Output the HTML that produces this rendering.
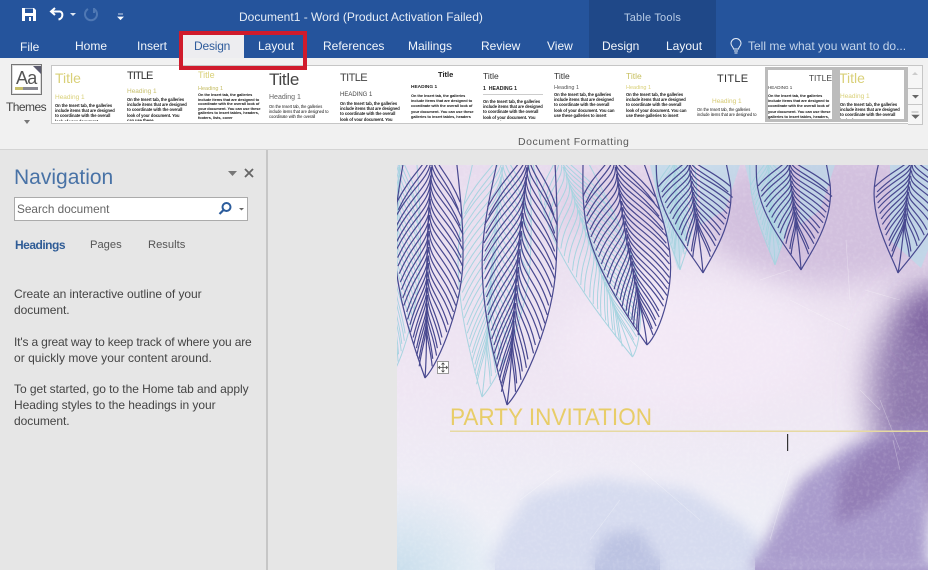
<!DOCTYPE html>
<html><head><meta charset="utf-8"><title>Document1 - Word</title>
<style>
html,body{margin:0;padding:0;overflow:hidden;width:928px;height:570px}
body{position:relative;background:#e6e6e6;font-family:"Liberation Sans",sans-serif;}
#w{position:absolute;left:0;top:0;width:928px;height:570px;overflow:hidden;filter:blur(.35px)}
.a{position:absolute;white-space:nowrap}
.t{position:absolute;white-space:nowrap;color:#f2f6fb;font-size:12px;top:39px;line-height:14px}
.th{position:absolute;overflow:hidden;top:67px;height:54px;width:69px;font-family:"Liberation Sans",sans-serif}
.th div{position:absolute;white-space:nowrap}
.b{font-size:4.1px;line-height:5.2px;color:#111;white-space:normal!important;font-weight:bold;width:60px;left:0;height:26px;overflow:hidden;letter-spacing:-.05px}
.g{color:#d9d078}
.p{position:absolute;left:14px;font-size:12px;line-height:16px;color:#444;white-space:nowrap;letter-spacing:-.05px}
</style></head><body><div id="w">
<!-- title bar -->
<div class="a" style="left:0;top:0;width:928px;height:58px;background:#25549c"></div>
<div class="a" style="left:589px;top:0;width:127px;height:58px;background:#1f4888"></div>
<div class="a" style="left:239px;top:10px;font-size:12px;line-height:15px;color:#e6edf6">Document1 - Word (Product Activation Failed)</div>
<div class="a" style="left:624px;top:11px;font-size:11px;line-height:14px;color:#b8cce6;letter-spacing:.2px">Table Tools</div>
<svg class="a" style="left:0;top:0" width="140" height="30" viewBox="0 0 140 30">
<path d="M22 8h12l2 2v11H22z" fill="#fff"/><rect x="25" y="8.500" width="8" height="4.500" fill="#25549c"/><rect x="25" y="16" width="8" height="5" fill="#25549c"/><rect x="29" y="17" width="2" height="4" fill="#fff"/>
<path d="M55 8l-4 3.500 4 3.500M51.500 11.500h8c4 0 4 7-1 8" fill="none" stroke="#fff" stroke-width="2"/>
<path d="M70 13h6l-3 3z" fill="#dfe8f3"/>
<path d="M88 9a6 6 0 1 0 6 0M94 8v5" fill="none" stroke="#4f78b4" stroke-width="2"/>
<path d="M118 14h5M118 17h5l-2.500 2.500z" fill="#fff" stroke="#fff" stroke-width=".8"/>
</svg>
<!-- tabs -->
<div class="a" style="left:183px;top:35px;width:61px;height:24px;background:#ededf0"></div>
<div class="t" style="left:20px;top:40px">File</div>
<div class="t" style="left:75px">Home</div>
<div class="t" style="left:137px">Insert</div>
<div class="t" style="left:194px;color:#2f5c9c;letter-spacing:-.2px">Design</div>
<div class="t" style="left:258px">Layout</div>
<div class="t" style="left:323px">References</div>
<div class="t" style="left:408px">Mailings</div>
<div class="t" style="left:481px">Review</div>
<div class="t" style="left:547px">View</div>
<div class="t" style="left:602px">Design</div>
<div class="t" style="left:666px">Layout</div>
<div class="t" style="left:748px;color:#c3d4ea">Tell me what you want to do...</div>
<svg class="a" style="left:729px;top:38px" width="15" height="17" viewBox="0 0 15 17"><path d="M4.500 11c0-2-2.500-3-2.500-5.500a5 5 0 0 1 10 0C12 8 9.500 9 9.500 11zM5 13h4M5.500 15h3" fill="none" stroke="#e8eff8" stroke-width="1"/></svg>
<!-- ribbon -->
<div class="a" style="left:0;top:58px;width:928px;height:91px;background:#f1f1f1;border-bottom:1px solid #d4d4d4"></div>
<div class="a" style="left:179px;top:31px;width:120px;height:31px;border:4.500px solid #d01b2c;z-index:5"></div>
<!-- themes -->
<div class="a" style="left:11px;top:64px;width:29px;height:29px;border:1px solid #777;background:#fff;box-shadow:inset 0 0 0 1px #ddd"></div>
<svg class="a" style="left:11px;top:64px" width="31" height="31" viewBox="0 0 31 31"><path d="M22 2h8v8z" fill="#5b5b6e"/><rect x="4" y="23" width="23" height="3" fill="#8a8a92"/><rect x="4" y="23" width="8" height="3" fill="#c8c06c"/></svg>
<div class="a" style="left:16px;top:67px;font-size:18px;line-height:22px;color:#555;letter-spacing:-.8px">Aa</div>
<div class="a" style="left:6px;top:100px;font-size:12px;line-height:15px;color:#444;letter-spacing:-.55px">Themes</div>
<svg class="a" style="left:22px;top:120px" width="10" height="5"><path d="M2 0h6l-3 4z" fill="#777"/></svg>
<div class="a" style="left:51px;top:65px;width:856px;height:57px;background:#fff;border:1px solid #c6c6c6"></div>
<!-- gallery -->
<div class="th" style="left:55px"><div class="g" style="top:3px;font-size:14px">Title</div><div class="g" style="top:27px;font-size:6.500px">Heading 1</div><div class="b" style="top:36px">On the Insert tab, the galleries include items that are designed to coordinate with the overall look of your document.</div></div>
<div class="th" style="left:127px"><div style="top:3px;font-size:11px;color:#333;letter-spacing:-.9px">TITLE</div><div class="g" style="top:21px;font-size:6.500px;color:#c7bf6c">Heading 1</div><div class="b" style="top:30px">On the Insert tab, the galleries include items that are designed to coordinate with the overall look of your document. You can use these</div></div>
<div class="th" style="left:198px"><div class="g" style="top:3px;font-size:9px">Title</div><div class="g" style="top:19px;font-size:5.500px;color:#c3bb60">Heading 1</div><div class="b" style="top:26px;font-size:3.900px;line-height:4.600px;height:27px;width:64px">On the Insert tab, the galleries include items that are designed to coordinate with the overall look of your document. You can use these galleries to insert tables, headers, footers, lists, cover</div></div>
<div class="th" style="left:269px"><div style="top:3px;font-size:17px;color:#444;letter-spacing:-.3px">Title</div><div style="top:27px;font-size:7px;color:#666">Heading 1</div><div class="b" style="top:37px;font-weight:normal">On the Insert tab, the galleries include items that are designed to coordinate with the overall</div></div>
<div class="th" style="left:340px"><div style="top:5px;font-size:11px;color:#444;letter-spacing:-.6px">TITLE</div><div style="top:25px;font-size:6px;color:#444">HEADING 1</div><div class="b" style="top:34px">On the Insert tab, the galleries include items that are designed to coordinate with the overall look of your document. You can use these</div></div>
<div class="th" style="left:411px"><div style="top:3px;left:27px;font-size:7.500px;font-weight:bold;color:#222">Title</div><div style="top:18px;font-size:4.800px;font-weight:bold;color:#222">HEADING 1</div><div class="b" style="top:26px;width:64px;height:27px;font-size:3.900px">On the Insert tab, the galleries include items that are designed to coordinate with the overall look of your document. You can use these galleries to insert tables, headers</div></div>
<div class="th" style="left:483px"><div style="top:4px;font-size:8.500px;color:#333">Title</div><div style="top:19px;font-size:5.200px;color:#222;font-weight:bold">1&nbsp; HEADING 1</div><div style="top:27px;width:60px;height:1px;background:#ccc"></div><div class="b" style="top:32px">On the Insert tab, the galleries include items that are designed to coordinate with the overall look of your document. You can use these</div></div>
<div class="th" style="left:554px"><div style="top:4px;font-size:8.500px;color:#333">Title</div><div style="top:18px;font-size:5.500px;color:#555">Heading 1</div><div class="b" style="top:25px;width:62px">On the Insert tab, the galleries include items that are designed to coordinate with the overall look of your document. You can use these galleries to insert tables, headers,</div></div>
<div class="th" style="left:626px"><div class="g" style="top:4px;font-size:8.500px;color:#c8c060">Title</div><div class="g" style="top:18px;font-size:5.500px">Heading 1</div><div class="b" style="top:25px;width:62px">On the Insert tab, the galleries include items that are designed to coordinate with the overall look of your document. You can use these galleries to insert tables, headers,</div></div>
<div class="th" style="left:697px"><div style="top:6px;left:20px;font-size:11px;color:#333;letter-spacing:.3px">TITLE</div><div class="g" style="top:31px;left:15px;font-size:6.500px;color:#d5c970">Heading 1</div><div class="b" style="top:40px;font-weight:normal;height:11px;width:62px">On the Insert tab, the galleries include items that are designed to</div></div>
<!-- selected -->
<div class="a" style="left:765px;top:67px;width:143px;height:55px;background:#bcbcbc"></div>
<div class="a" style="left:768px;top:70px;width:64px;height:49px;background:#fff"></div>
<div class="a" style="left:840px;top:70px;width:64px;height:49px;background:#fff"></div>
<div class="th" style="left:768px;top:70px;height:49px;width:64px"><div style="top:3px;right:0;font-size:8.500px;color:#444">TITLE</div><div style="top:15px;font-size:4.500px;color:#333">HEADING 1</div><div class="b" style="top:23px;width:64px;height:26px;font-size:3.900px">On the Insert tab, the galleries include items that are designed to coordinate with the overall look of your document. You can use these galleries to insert tables, headers, footers, lists, cover</div></div>
<div class="th" style="left:840px;top:70px;height:49px;width:64px"><div class="g" style="top:0;left:-1px;font-size:14px">Title</div><div class="g" style="top:23px;font-size:6.500px">Heading 1</div><div class="b" style="top:32px">On the Insert tab, the galleries include items that are designed to coordinate with the overall look of</div></div>
<!-- scroll -->
<div class="a" style="left:908px;top:65px;width:14px;height:58px;background:#f6f6f6;border:1px solid #c6c6c6;border-left:0"></div>
<div class="a" style="left:908px;top:88px;width:14px;height:1px;background:#c6c6c6"></div>
<div class="a" style="left:908px;top:104px;width:14px;height:1px;background:#c6c6c6"></div>
<svg class="a" style="left:908px;top:65px" width="15" height="58"><path d="M4 10h6l-3-3z" fill="#ccc"/><path d="M4 30h7l-3.500 3.500z" fill="#666"/><path d="M3.500 47h7M4 50h7l-3.500 3.500z" fill="#666" stroke="#666" stroke-width=".6"/></svg>
<div class="a" style="left:518px;top:136px;font-size:10.500px;line-height:13px;color:#5a5a5a;letter-spacing:.55px">Document Formatting</div>
<!-- nav -->
<div class="a" style="left:266px;top:150px;width:2px;height:420px;background:#c6c6c6"></div>
<div class="a" style="left:14px;top:165px;font-size:21px;line-height:25px;color:#4872a6">Navigation</div>
<svg class="a" style="left:226px;top:168px" width="30" height="12"><path d="M2 3h9l-4.500 5z" fill="#777"/><path d="M19 1l8 8M27 1l-8 8" stroke="#666" stroke-width="1.800"/></svg>
<div class="a" style="left:14px;top:197px;width:232px;height:22px;background:#fff;border:1px solid #ababab"></div>
<div class="a" style="left:17px;top:202px;font-size:11.800px;line-height:14px;color:#666">Search document</div>
<svg class="a" style="left:216px;top:199px" width="30" height="20"><circle cx="10.500" cy="8" r="4" fill="none" stroke="#2b5c9c" stroke-width="2"/><path d="M7.500 11l-4 4" stroke="#2b5c9c" stroke-width="2.200"/><path d="M23 9h5l-2.500 2.500z" fill="#666"/></svg>
<div class="a" style="left:15px;top:238px;font-size:12px;line-height:14px;font-weight:bold;color:#2f5c96;letter-spacing:-.5px">Headings</div>
<div class="a" style="left:90px;top:238px;font-size:11.200px;line-height:14px;color:#555">Pages</div>
<div class="a" style="left:148px;top:238px;font-size:11.200px;line-height:14px;color:#555">Results</div>
<div class="p" style="top:286px">Create an interactive outline of your<br>document.</div>
<div class="p" style="top:334px;letter-spacing:-.16px">It's a great way to keep track of where you are<br><span style="letter-spacing:.03px">or quickly move your content around.</span></div>
<div class="p" style="top:381px">To get started, go to the Home tab and apply<br>Heading styles to the headings in your<br>document.</div>
<!-- document -->
<svg class="a" style="left:397px;top:165px" width="531" height="405" viewBox="397 165 531 405">
<defs>
<filter id="b15" x="-50%" y="-50%" width="200%" height="200%"><feGaussianBlur stdDeviation="16"/></filter>
<filter id="b4" x="-20%" y="-20%" width="140%" height="140%"><feGaussianBlur stdDeviation="7"/></filter>
<filter id="n" x="0" y="0" width="100%" height="100%"><feTurbulence type="fractalNoise" baseFrequency=".3" numOctaves="2" seed="4"/><feColorMatrix values="0 0 0 0 1 0 0 0 0 1 0 0 0 0 1 0 0 0 1.400 -.62"/></filter>
<style>.l path{vector-effect:non-scaling-stroke}</style>
<g id="Av" class="l" fill="none">
<path d="M50-20c2 19 23 25 42 55M50-5c2 19 25 25 45 55M50 10c2 19 26 25 47 55M50 25c2 19 26 25 48 55M50 40c2 19 26 25 48 55M50 55c2 19 25 25 45 55M50 70c2 19 23 25 42 55M50 85c2 19 20 24 37 53M50 100c2 18 17 23 30 50M50 115c2 16 12 21 22 47M50 130c1 15 9 19 16 42M50 145c1 13 6 17 10 37"/>
<path d="M50-20c-2 19-25 25-46 55M50-5c-2 19-26 25-48 55M50 10c-2 19-25 25-47 55M50 25c-2 19-25 25-45 55M50 40c-2 19-23 25-42 55M50 55c-2 19-21 25-38 55M50 70c-2 19-19 25-34 55M50 85c-2 19-15 24-28 53M50 100c-2 18-13 23-23 50M50 115c-2 16-10 21-18 47M50 130c-1 15-7 19-13 42M50 145c-1 13-5 17-9 37"/>
</g>
<g id="A" class="l" fill="none">
<path d="M50 200C70 185 100 130 98 85C97 50 90 20 85-5M50 200C30 165 0 110 2 60C3 35 8 15 12-5M50 200C54 150 42 100 52-5"/>
<use href="#Av"/>
<use href="#Av" transform="translate(2.500 7) scale(.95 1)"/>
</g>
<g id="Bv" class="l" fill="none">
<path d="M49-10c1 10 27 14 50 30M49 0c1 10 27 14 51 30M49 10c1 10 25 14 45 30M49 20c1 10 21 14 39 30M49 30c1 10 17 14 31 30M50 40c1 10 12 14 22 30M50 50c1 10 7 14 13 30"/>
<path d="M48-10c-1 10-24 14-44 30M48 0c-1 10-22 14-41 30M48 10c-1 10-20 14-36 30M48 20c-1 10-17 14-30 30M48 30c-1 10-13 14-23 30M48 40c-1 10-9 14-16 30M49 50c-1 10-6 14-11 30"/>
</g>
<g id="B" class="l" fill="none">
<path d="M50 100C60 88 100 55 99 18C98 8 97 2 96-5M50 100C40 85 2 50 3 15C3 8 4 2 5-5M50 100C52 70 46 30 48-5"/>
<use href="#Bv"/>
<use href="#Bv" transform="translate(4 5) scale(.92 1)"/>
</g>
<linearGradient id="bg" x1="0" y1="0" x2="0" y2="1"><stop offset="0" stop-color="#e8dcee"/><stop offset=".55" stop-color="#efe6f3"/><stop offset="1" stop-color="#eef2f8"/></linearGradient>
<radialGradient id="c" cx="0" cy="1" r="1"><stop offset="0" stop-color="#c9deec"/><stop offset="1" stop-color="#c9deec" stop-opacity="0"/></radialGradient>
<linearGradient id="s1" x1="0" y1="0" x2="0" y2="1"><stop offset="0" stop-color="#d6dbef" stop-opacity="0"/><stop offset="1" stop-color="#d6dbef"/></linearGradient>
<linearGradient id="s2" x1="0" y1="0" x2="0" y2="1"><stop offset="0" stop-color="#bcc3e2" stop-opacity="0"/><stop offset="1" stop-color="#bcc3e2"/></linearGradient>
<linearGradient id="s3" x1="0" y1="0" x2="0" y2="1"><stop offset="0" stop-color="#a99bcc" stop-opacity="0"/><stop offset="1" stop-color="#a99bcc"/></linearGradient>
</defs>
<rect x="397" y="165" width="531" height="405" fill="url(#bg)"/>
<ellipse cx="830" cy="215" rx="130" ry="70" fill="#d2c0de" filter="url(#b15)"/>
<ellipse cx="620" cy="205" rx="70" ry="40" fill="#dfcfe6" filter="url(#b15)"/>
<ellipse cx="690" cy="345" rx="130" ry="65" fill="#f3e9f6" filter="url(#b15)"/>
<ellipse cx="945" cy="395" rx="75" ry="115" fill="#8f79ae" filter="url(#b15)"/>
<ellipse cx="935" cy="322" rx="24" ry="22" fill="#76599a" filter="url(#b15)"/>
<rect x="397" y="480" width="110" height="90" fill="url(#c)"/>
<path d="M485 570L505 530L528 495L600 478L690 490L745 525L785 570Z" fill="#d6dbef" filter="url(#b4)"/>
<rect x="495" y="556" width="285" height="14" fill="url(#s1)"/>
<path d="M590 570L605 535L640 530L665 570Z" fill="#bcc3e2" filter="url(#b4)"/>
<rect x="595" y="556" width="65" height="14" fill="url(#s2)"/>
<path d="M750 570L780 515L800 480L850 445L928 425V570Z" fill="#a99bcc" filter="url(#b4)"/>
<rect x="755" y="556" width="173" height="14" fill="url(#s3)"/>
<path d="M835 525L880 505L928 455V420L870 445L840 475Z" fill="#937eb6" filter="url(#b4)"/>
<rect x="397" y="165" width="531" height="405" filter="url(#n)" opacity=".22"/>
<g stroke="#fff" stroke-width=".6" fill="none" opacity=".35">
<path d="M790 300L850 330M846 240L850 300M880 400L900 450M860 390L880 410M893 440L900 470M770 540L790 470M520 500L560 470M630 460L700 520M590 540L620 500M865 290L900 300M760 280L790 270"/>
</g>
<!-- light leaves -->
<g stroke="#a8d4e0" stroke-width="1">
<use href="#A" transform="matrix(.5 0 -.03 1.04 374 165)"/>
<use href="#A" transform="matrix(.76 0 -.1 1.16 464 165)"/>
<use href="#A" transform="matrix(.75 0 .35 .96 525 165)"/>
<path d="M650 165L690 165L686 240L678 270L664 225Z" fill="#b9dcea" stroke="none" opacity=".7"/>
<path d="M745 165L790 165L790 220L775 263L760 225Z" fill="#b9dcea" stroke="none" opacity=".7"/>
<path d="M890 165L928 165L928 250L921 268L890 240Z" fill="#b9dcea" stroke="none" opacity=".7"/>
<path d="M700 165L740 165L725 210L700 225Z" fill="#b9dcea" stroke="none" opacity=".65"/>
<path d="M800 165L835 165L820 210L800 225Z" fill="#b9dcea" stroke="none" opacity=".65"/>
<use href="#B" transform="matrix(.42 0 .05 1.05 654 165)"/>
<use href="#B" transform="matrix(.42 0 .06 1 748 165)"/>
</g>
<!-- dark leaves -->
<g stroke="#48488f" stroke-width="1.200">
<use href="#A" transform="matrix(.72 0 -.03 1.065 395 165)"/>
<use href="#A" transform="matrix(.78 0 -.1 1.2 488 165)"/>
<use href="#A" transform="matrix(.82 0 .16 .9 574 165)"/>
<use href="#B" transform="matrix(.76 0 .12 1.08 653 165)"/>
<use href="#B" transform="matrix(.76 0 .1 1.05 753 165)"/>
<use href="#B" transform="matrix(.76 0 -.15 1.08 875 165)"/>
</g>
<text x="450" y="425" font-family="Liberation Sans" font-size="24" fill="#e8cd68" textLength="202" lengthAdjust="spacingAndGlyphs">PARTY INVITATION</text>
<rect x="450" y="430.500" width="478" height="1.500" fill="#e6d9a2"/>
<rect x="787" y="434" width="1.200" height="17" fill="#333"/>
<rect x="437.500" y="361.500" width="11" height="12" fill="#fff" stroke="#999"/>
<path d="M443 363v9M439 367.500h8M441.500 364.500l1.500-1.500 1.500 1.500M441.500 370.500l1.500 1.500 1.500-1.500M440 366l-1.500 1.500 1.500 1.500M446 366l1.500 1.500-1.500 1.500" stroke="#444" fill="none" stroke-width=".8"/>
</svg>
</div></body></html>
